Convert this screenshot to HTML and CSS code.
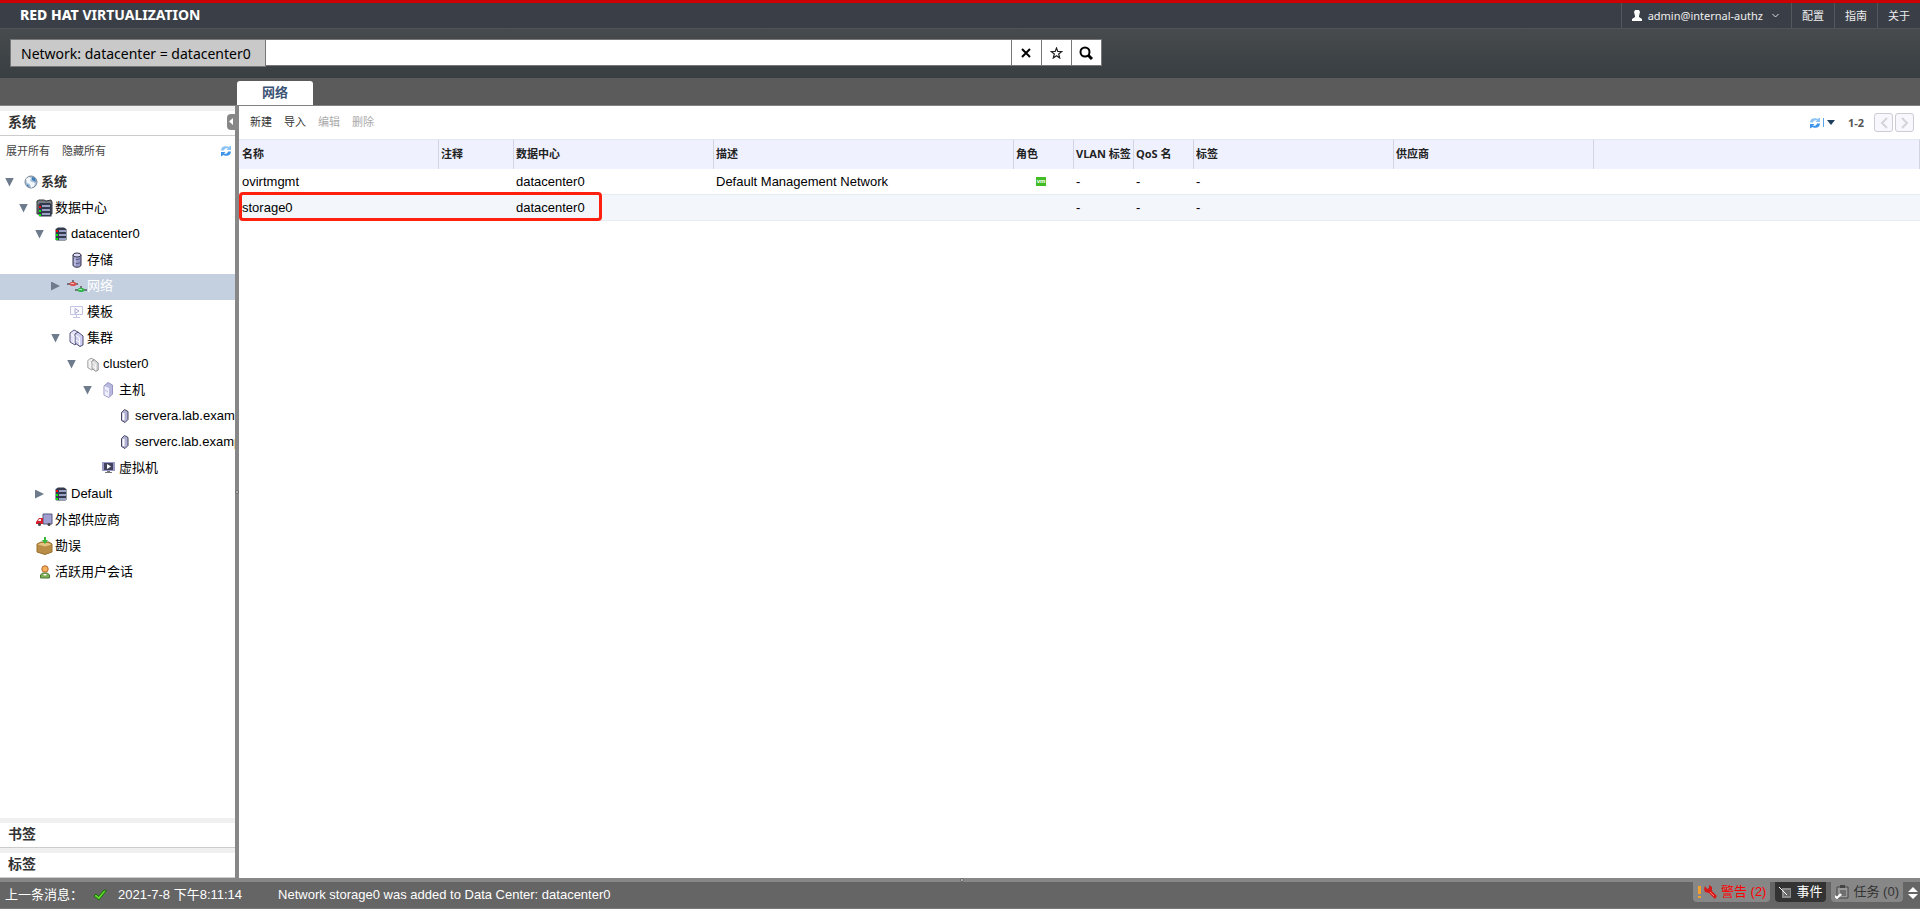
FILE: index.html
```html
<!DOCTYPE html>
<html lang="zh-CN">
<head>
    <meta charset="UTF-8">
    <meta name="viewport" content="width=device-width, initial-scale=1.0">
    <title>Red Hat Virtualization</title>
    <link rel="stylesheet" href="styles.css">
</head>
<body>
    <!-- shared icons -->
    <svg class="sprite" aria-hidden="true">
        <symbol id="refresh" viewBox="0 0 12 12">
            <path d="M1 5.500C1 2.500 3.500 1 6 1.300c1.500 0 2 .200 2.500.700L11 .500V5H6.500L8 3.500C6.500 2.700 4.500 3.200 4 5.500z" fill="#8cc3f5"/>
            <path d="M11 6.500c0 3-2.500 4.500-5 4.200-1.500 0-2-.200-2.500-.700L1 11.500V7h4.500L4 8.500C5.500 9.300 7.500 8.800 8 6.500z" fill="#3d94ea"/>
        </symbol>
        <symbol id="globe" viewBox="0 0 14 14">
            <circle cx="7" cy="7" r="6" fill="#a9c3dd" stroke="#7b8794"/>
            <path d="M2 4l3-2 2 1-1 3 2 1 3 1-1 3-3 2-1-4-3-1z" fill="#f4f8fb"/>
            <path d="M8 2l3 1 1 4-2-1-2-1zM3 9l3 3-3-1z" fill="#3f7cb8"/>
        </symbol>
        <symbol id="dc" viewBox="0 0 12 14">
            <path d="M1.500 1.500L3 .500h6l1.500 1 1 1v10l-1 1h-9l-1-1v-10z" fill="#333a4d"/>
            <path d="M4 3h7v2H4zM4 7h7v2H4zM4 11h7v2H4z" fill="#9aa2c4"/>
            <path d="M1 3h2v2H1z" fill="#f00"/>
            <path d="M1 7h2v2H1zM1 11h2v2H1z" fill="#0e0"/>
        </symbol>
        <symbol id="dcs" viewBox="0 0 17 18">
            <path d="M1 2l2-1h5l2 1 5-1 1 2v12H1z" fill="#777c83" stroke="#303438"/>
            <path d="M4 4h10l1.500 1.500v12H3.500L2.500 16V5.500z" fill="#333a4d"/>
            <path d="M6 6h8v2H6zM6 10h8v2H6zM6 14h8v2H6z" fill="#9aa2c4"/>
            <path d="M3 7h2v2H3z" fill="#f00"/>
            <path d="M3 11h2v2H3zM3 15h2v2H3z" fill="#0e0"/>
        </symbol>
        <symbol id="storage" viewBox="0 0 10 16">
            <path d="M1 3v10c0 3 8 3 8 0V3" fill="#9999c8" stroke="#34344b"/>
            <ellipse cx="5" cy="3" rx="4" ry="2" fill="#dcdcf4" stroke="#34344b"/>
            <path d="M1.500 6c1 2 6 2 7 0M1.500 10c1 2 6 2 7 0" fill="none" stroke="#5d5d8c"/>
            <path d="M3 5.500v8" stroke="#e2e2f7"/>
        </symbol>
        <symbol id="network" viewBox="0 0 20 14">
            <path d="M0 5h11M6 1v2M8 11h12M14 7v2" stroke="#555" stroke-width="1.500"/>
            <path d="M2 5l2-2h4l2 2-2 2H4z" fill="#d8504f"/>
            <path d="M10 11l2-2h4l2 2-2 2h-4z" fill="#32b84e"/>
            <path d="M4 4.500h3M12 10.500h3" stroke="#fff" stroke-opacity=".6"/>
        </symbol>
        <symbol id="template" viewBox="0 0 14 12">
            <path d="M.500.500h12v8H.500zM6.500 9v2M3 11.500h7" fill="#fafaff" stroke="#c3c3e2"/>
            <path d="M5 2.500l4 2.500-4 2.500z" fill="#fff" stroke="#aaaad2"/>
        </symbol>
        <symbol id="cluster" viewBox="0 0 15 18">
            <path d="M1 4l4-3 4 2v10l-3 3-5-3z" fill="#e4e4fa" stroke="#5b5b80"/>
            <path d="M6 5l3-2 5 4v9l-3 1.500L6 14z" fill="#cfcff2" stroke="#4c4c70"/>
            <path d="M6.500 6l4 3v7M2 5l3 2v7M7 11l3 2" fill="none" stroke="#fff"/>
        </symbol>
        <symbol id="cluster-gray" viewBox="0 0 15 18">
            <path d="M1 4l4-3 4 2v10l-3 3-5-3z" fill="#efefef" stroke="#8b8b8b"/>
            <path d="M6 5l3-2 5 4v9l-3 1.500L6 14z" fill="#dcdcdc" stroke="#777"/>
            <path d="M6.500 6l4 3v7M2 5l3 2v7M7 11l3 2" fill="none" stroke="#fff"/>
        </symbol>
        <symbol id="host" viewBox="0 0 11 16">
            <path d="M1 4l4-3.500L9.500 3v9L6 15.500 1 13z" fill="#b9b9e0" stroke="#9494bd"/>
            <path d="M1.500 4L6 6v9l-4.500-2z" fill="#eeeeff"/>
            <path d="M2 8l3 2" stroke="#bcbcd8"/>
        </symbol>
        <symbol id="server" viewBox="0 0 8 14">
            <path d="M.500 3.500l3-3 3.500 2v8l-3 3-3.500-2z" fill="#b2b2d4" stroke="#44445f"/>
            <path d="M2.500 4v7" stroke="#fff" stroke-width="2"/>
        </symbol>
        <symbol id="vm" viewBox="0 0 14 12">
            <path d="M0 0h13v9H0z" fill="#9a9ac6"/>
            <path d="M2 1h9v7H2z" fill="#42425d"/>
            <path d="M5 2l4 2.500L5 7z" fill="#fff"/>
            <path d="M5 9h3v1h2v1H3v-1h2z" fill="#777"/>
        </symbol>
        <symbol id="truck" viewBox="0 0 17 14">
            <path d="M7 1h9v10H7z" fill="#a0a0d2" stroke="#57577a"/>
            <path d="M0 9l3-4h4v6H0z" fill="#d51f2c"/>
            <path d="M3 6h2v2H2z" fill="#eee"/>
            <circle cx="3.500" cy="11.500" r="1.500" fill="#444"/>
            <circle cx="13" cy="11.500" r="1.500" fill="#444"/>
        </symbol>
        <symbol id="box" viewBox="0 0 17 18">
            <path d="M1 7l4-2h8l3 2v8l-7 2.500L1 15z" fill="#b98d45" stroke="#97702f"/>
            <path d="M1.500 7.500L9 9.500l6.500-2L12 6H5z" fill="#e4c483"/>
            <path d="M8 0v3H6l3 4 3-4h-2V0z" fill="#36b83a"/>
        </symbol>
        <symbol id="user" viewBox="0 0 10 14">
            <path d="M.500 13V10l2-2h5l2 2v3z" fill="#7fae59" stroke="#4b7a34"/>
            <circle cx="5" cy="4" r="3.200" fill="#f5b25e" stroke="#b6642b"/>
            <path d="M3 9l2 2 2-2z" fill="#fff"/>
        </symbol>
    </svg>

    <header class="topbar">
        <div class="brand"><b>RED HAT</b> VIRTUALIZATION</div>
        <nav class="top-links">
            <a href="#" class="user-link">
                <svg width="10" height="11" viewBox="0 0 10 11"><path d="M3 0h4l1 2-1 4v1l3 2v2H0V9l3-2V6L2 2z" fill="#fff"/></svg>
                admin@internal-authz
                <svg class="chevron" width="7" height="5" viewBox="0 0 7 5"><path d="M.500 1l3 3 3-3" fill="none" stroke="#ddd"/></svg>
            </a>
            <a href="#">配置</a>
            <a href="#">指南</a>
            <a href="#">关于</a>
        </nav>
    </header>

    <form class="search">
        <label class="search-prefix" for="search">Network: datacenter = datacenter0</label>
        <input class="search-input" id="search" type="text">
        <button type="button" aria-label="清除"><svg width="10" height="10" viewBox="0 0 10 10"><path d="M1 1l8 8M9 1L1 9" stroke="#000" stroke-width="2"/></svg></button>
        <button type="button" aria-label="书签"><svg width="13" height="12" viewBox="0 0 13 12"><path d="M6.500 1l1.300 3.500h4L8.700 7l1 4-3.200-2.300L3.300 11l1-4L1.200 4.500h4z" fill="none" stroke="#222" stroke-width="1.200"/></svg></button>
        <button type="button" aria-label="搜索"><svg width="14" height="14" viewBox="0 0 14 14"><circle cx="6" cy="6" r="4.500" fill="none" stroke="#000" stroke-width="2"/><path d="M9 9l4 4" stroke="#000" stroke-width="3"/></svg></button>
    </form>

    <div class="tabs"><a href="#" class="tab">网络</a></div>

    <div class="main">
        <aside class="sidebar">
            <h2 class="panel-title">系统
                <button type="button" class="collapse" aria-label="折叠"><svg width="4" height="7" viewBox="0 0 4 7"><path d="M4 0v7L0 3.500z" fill="#fff"/></svg></button>
            </h2>
            <div class="tree-tools">
                <a href="#">展开所有</a>
                <a href="#">隐藏所有</a>
                <svg class="tree-refresh" width="12" height="12"><use href="#refresh"/></svg>
            </div>
            <ul class="tree">
                <li><div class="node root"><i class="arrow open"></i><span class="icon"><svg width="14" height="14"><use href="#globe"/></svg></span>系统</div>
                    <ul>
                        <li><div class="node"><i class="arrow open"></i><span class="icon"><svg width="17" height="18"><use href="#dcs"/></svg></span>数据中心</div>
                            <ul>
                                <li><div class="node"><i class="arrow open"></i><span class="icon"><svg width="12" height="14"><use href="#dc"/></svg></span>datacenter0</div>
                                    <ul>
                                        <li><div class="node"><i class="arrow"></i><span class="icon"><svg width="10" height="16"><use href="#storage"/></svg></span>存储</div></li>
                                        <li><div class="node selected"><i class="arrow closed"></i><span class="icon"><svg width="20" height="14"><use href="#network"/></svg></span>网络</div></li>
                                        <li><div class="node"><i class="arrow"></i><span class="icon"><svg width="14" height="12"><use href="#template"/></svg></span>模板</div></li>
                                        <li><div class="node"><i class="arrow open"></i><span class="icon"><svg width="15" height="18"><use href="#cluster"/></svg></span>集群</div>
                                            <ul>
                                                <li><div class="node"><i class="arrow open"></i><span class="icon"><svg width="12" height="15"><use href="#cluster-gray"/></svg></span>cluster0</div>
                                                    <ul>
                                                        <li><div class="node"><i class="arrow open"></i><span class="icon"><svg width="11" height="16"><use href="#host"/></svg></span>主机</div>
                                                            <ul>
                                                                <li><div class="node"><i class="arrow"></i><span class="icon"><svg width="8" height="14"><use href="#server"/></svg></span>servera.lab.example.com</div></li>
                                                                <li><div class="node"><i class="arrow"></i><span class="icon"><svg width="8" height="14"><use href="#server"/></svg></span>serverc.lab.example.com</div></li>
                                                            </ul>
                                                        </li>
                                                        <li><div class="node"><i class="arrow"></i><span class="icon"><svg width="14" height="12"><use href="#vm"/></svg></span>虚拟机</div></li>
                                                    </ul>
                                                </li>
                                            </ul>
                                        </li>
                                    </ul>
                                </li>
                                <li><div class="node"><i class="arrow closed"></i><span class="icon"><svg width="12" height="14"><use href="#dc"/></svg></span>Default</div></li>
                            </ul>
                        </li>
                        <li><div class="node"><i class="arrow"></i><span class="icon"><svg width="17" height="14"><use href="#truck"/></svg></span>外部供应商</div></li>
                        <li><div class="node"><i class="arrow"></i><span class="icon"><svg width="17" height="18"><use href="#box"/></svg></span>勘误</div></li>
                        <li><div class="node"><i class="arrow"></i><span class="icon"><svg width="10" height="14"><use href="#user"/></svg></span>活跃用户会话</div></li>
                    </ul>
                </li>
            </ul>
            <h2 class="panel-title">书签</h2>
            <h2 class="panel-title">标签</h2>
        </aside>
        <div class="splitter"><i class="grip"></i></div>
        <section class="content">
            <div class="toolbar">
                <button type="button">新建</button>
                <button type="button">导入</button>
                <button type="button" disabled>编辑</button>
                <button type="button" disabled>删除</button>
                <div class="paging">
                    <svg width="12" height="12"><use href="#refresh"/></svg>
                    <svg width="12" height="9" viewBox="0 0 12 9"><path d="M.500 0v9" stroke="#5aa5ea"/><path d="M4 2h8L8 7z" fill="#1d3e5c"/></svg>
                    <span class="range">1-2</span>
                    <button type="button" class="page" aria-label="上一页"><svg width="8" height="12" viewBox="0 0 8 12"><path d="M7 1L2 6l5 5" fill="none" stroke="#d4d4d8" stroke-width="2"/></svg></button>
                    <button type="button" class="page" aria-label="下一页"><svg width="8" height="12" viewBox="0 0 8 12"><path d="M1 1l5 5-5 5" fill="none" stroke="#d4d4d8" stroke-width="2"/></svg></button>
                </div>
            </div>
            <div class="grid">
                <table>
                    <colgroup>
                        <col class="w200"><col class="w75"><col class="w200"><col class="w300"><col class="w60"><col class="w60"><col class="w60"><col class="w200"><col class="w200"><col>
                    </colgroup>
                    <thead>
                        <tr><th>名称</th><th>注释</th><th>数据中心</th><th>描述</th><th>角色</th><th>VLAN 标签</th><th>QoS 名</th><th>标签</th><th>供应商</th><th></th></tr>
                    </thead>
                    <tbody>
                        <tr><td>ovirtmgmt</td><td></td><td>datacenter0</td><td>Default Management Network</td><td><span class="vm-badge">vm</span></td><td>-</td><td>-</td><td>-</td><td></td><td></td></tr>
                        <tr><td>storage0</td><td></td><td>datacenter0</td><td></td><td></td><td>-</td><td>-</td><td>-</td><td></td><td></td></tr>
                    </tbody>
                </table>
                <div class="highlight"></div>
            </div>
        </section>
    </div>

    <footer class="statusbar">
        <i class="grip"></i>
        <span>上一条消息：</span>
        <svg class="ok" width="14" height="12" viewBox="0 0 14 12"><path d="M1 7l2-2 2.500 2.500L11 1l2.500.500L6 11z" fill="#5fdc28" stroke="#176b0c"/></svg>
        <span class="time">2021-7-8 下午8:11:14</span>
        <span>Network storage0 was added to Data Center: datacenter0</span>
        <div class="events">
            <button type="button" class="alert">
                <svg width="20" height="14" viewBox="0 0 20 14"><path d="M1 1h3v8H1zM1 11h3v2H1z" fill="#f5a02c"/><path d="M8 1l2 3 2-1V0l3 2v4l5 5-2 3-6-6-4-1-1-3z" fill="#d51a1a"/><path d="M13 7l4 4" stroke="#f77"/></svg>
                警告 (2)
            </button>
            <button type="button" class="active">
                <svg width="13" height="13" viewBox="0 0 13 13"><path d="M3 2h9v10H3z" fill="#8a8a8a"/><path d="M5 5h6M5 7h6M5 9h6" stroke="#444"/><path d="M0 1l8 8" stroke="#fff"/></svg>
                事件
            </button>
            <button type="button">
                <svg width="14" height="14" viewBox="0 0 14 14"><path d="M2 2h11v11H2z" fill="#999" stroke="#444"/><path d="M5 0h5v3H5z" fill="#444"/><path d="M5 6h6M5 8h6M7 10h4" stroke="#444"/><path d="M0 11l2 2 4-4" fill="none" stroke="#fff" stroke-width="2"/></svg>
                任务 (0)
            </button>
            <svg class="expand" width="10" height="12" viewBox="0 0 10 12"><path d="M5 0l5 5H0zM5 12l5-5H0z" fill="#fff"/></svg>
        </div>
    </footer>
</body>
</html>
```

FILE: styles.css
```css
* {
    box-sizing: border-box;
}

body {
    margin: 0;
    height: 100vh;
    display: flex;
    flex-direction: column;
    overflow: hidden;
    font: 13px/16px "Liberation Sans", "Noto Sans CJK SC", sans-serif;
    color: #000;
    background: #fff;
}

a {
    color: inherit;
    text-decoration: none;
}

button {
    font: inherit;
    color: inherit;
    margin: 0;
    cursor: pointer;
}

svg {
    display: block;
    flex: none;
}

.sprite {
    position: absolute;
    width: 0;
    height: 0;
}

/* header */
.topbar {
    display: flex;
    justify-content: space-between;
    height: 29px;
    border-top: 3px solid #c00;
    border-bottom: 1px solid #505459;
    background: #3a3f47;
    color: #eee;
    font-family: "Noto Sans", "Noto Sans CJK SC", sans-serif;
}

.brand {
    padding-left: 20px;
    font-size: 14px;
    font-weight: 700;
    line-height: 24px;
    color: #fff;
}

.brand b {
    font-weight: 800;
}

.top-links {
    display: flex;
    font-size: 11px;
}

.top-links a {
    display: flex;
    align-items: center;
    padding: 0 10px;
    border-left: 1px solid #54585d;
}

.top-links .user-link {
    gap: 6px;
    padding-right: 12px;
}

.chevron {
    margin-left: 3px;
}

/* search */
.search {
    display: flex;
    align-items: flex-start;
    height: 49px;
    padding: 10px;
    background: linear-gradient(#474b4e, #383e41);
}

.search-prefix,
.search-input,
.search button {
    height: 27px;
    border: 1px solid #777;
    background: #fff;
}

.search-prefix {
    height: 28px;
    padding: 0 14px 0 10px;
    line-height: 28px;
    font-family: "Noto Sans", sans-serif;
    font-size: 14px;
    white-space: nowrap;
    background: #c9c9c9;
}

.search-input {
    flex: 0 1 746px;
    min-width: 100px;
    border-left: 0;
    padding: 0 6px;
}

.search button {
    display: flex;
    align-items: center;
    justify-content: center;
    width: 30px;
    padding: 0;
    border-left: 0;
}

.tabs {
    display: flex;
    align-items: flex-end;
    height: 28px;
    padding-left: 237px;
    border-bottom: 1px solid #828282;
    background: #5b5b5b;
}

.tab {
    height: 24px;
    width: 76px;
    text-align: center;
    line-height: 24px;
    font-weight: bold;
    color: #3b5374;
    background: #fff;
    border-radius: 3px 3px 0 0;
}

.main {
    flex: 1;
    display: flex;
    min-height: 0;
}

/* sidebar */
.sidebar {
    flex: 0 0 235px;
    display: flex;
    flex-direction: column;
    overflow: hidden;
}

.panel-title {
    display: flex;
    align-items: center;
    justify-content: space-between;
    height: 30px;
    flex: none;
    margin: 0;
    padding: 0 0 3px 8px;
    font-size: 14px;
    color: #333;
    border-top: 5px solid #f0f0f0;
    border-bottom: 1px solid #ccc;
}

.collapse {
    display: flex;
    align-items: center;
    justify-content: center;
    width: 8px;
    height: 16px;
    padding: 0;
    border: 0;
    border-radius: 4px 0 0 4px;
    background: #878787;
}

.tree-tools {
    display: flex;
    align-items: center;
    gap: 12px;
    height: 34px;
    padding: 0 3px 4px 6px;
    font-size: 11px;
    color: #444;
}

.tree-refresh {
    margin-left: auto;
}

.tree,
.tree ul {
    margin: 0;
    padding: 0;
    list-style: none;
}

.tree {
    flex: 1;
    overflow: hidden;
}

.node {
    display: flex;
    align-items: center;
    height: 26px;
    padding-bottom: 2px;
    white-space: nowrap;
}

/* one indent step per level */
.tree ul .node { padding-left: 16px; }
.tree ul ul .node { padding-left: 32px; }
.tree ul ul ul .node { padding-left: 48px; }
.tree ul ul ul ul .node { padding-left: 64px; }
.tree ul ul ul ul ul .node { padding-left: 80px; }
.tree ul ul ul ul ul ul .node { padding-left: 96px; }

.root {
    padding-left: 2px;
    font-weight: bold;
    color: #333;
}

.tree .selected {
    background: #c4d0e0;
    color: #fff;
}

.arrow {
    flex: 0 0 18px;
    padding-left: 3px;
}

.arrow::before {
    display: block;
    width: 9px;
    height: 9px;
    background: #6d7b8d;
}

.arrow.open::before {
    content: "";
    clip-path: polygon(0 0, 100% 0, 50% 100%);
}

.arrow.closed::before {
    content: "";
    clip-path: polygon(0 0, 100% 50%, 0 100%);
}

.icon {
    flex: 0 0 21px;
    display: flex;
    justify-content: center;
}

.splitter {
    flex: 0 0 4px;
    display: flex;
    align-items: center;
    background: #878787;
}

.grip {
    width: 4px;
    height: 4px;
    background: #ccc;
    border: 1px solid #666;
    border-radius: 2px;
}

/* content */
.content {
    flex: 1;
    min-width: 0;
}

.toolbar {
    display: flex;
    align-items: center;
    gap: 12px;
    height: 33px;
    padding: 0 6px 0 11px;
    font-size: 11px;
    color: #333;
}

.toolbar > button {
    padding: 0 0 2px;
}

.toolbar button {
    border: 0;
    background: none;
}

.toolbar button:disabled {
    color: #aaa;
}

.paging {
    display: flex;
    align-items: center;
    gap: 2px;
    margin-left: auto;
}

.range {
    margin: 0 8px 0 11px;
    font: bold 11px "Open Sans", sans-serif;
    color: #555;
}

.toolbar .page {
    display: flex;
    align-items: center;
    justify-content: center;
    width: 19px;
    height: 19px;
    padding: 0;
    border: 1px solid #ccccd4;
    border-radius: 3px;
    background: #f7f7fd;
}

.grid {
    position: relative;
}

table {
    width: 100%;
    table-layout: fixed;
    border-collapse: separate;
    border-spacing: 0;
}

.w60 { width: 60px; }
.w75 { width: 75px; }
.w200 { width: 200px; }
.w300 { width: 300px; }

th {
    height: 30px;
    padding: 0 0 2px 2px;
    text-align: left;
    white-space: nowrap;
    font: bold 11px/16px "Open Sans", "Noto Sans CJK SC", sans-serif;
    color: #222;
    background: #eff1ff;
    border-top: 1px solid #e4e8f0;
    border-right: 1px solid #d2d4e2;
}

td {
    height: 26px;
    padding: 0 2px;
    white-space: nowrap;
    border-bottom: 1px solid #e8edf2;
}

th:first-child,
td:first-child {
    padding-left: 3px;
}

tbody tr:nth-child(even) {
    background: #f3f6fb;
}

.vm-badge {
    display: block;
    width: 10px;
    height: 9px;
    margin-left: 20px;
    background: #43bd25;
    color: #fff;
    font-size: 6px;
    font-weight: bold;
    line-height: 8px;
    text-align: center;
}

.highlight {
    position: absolute;
    top: 53px;
    left: 0;
    width: 363px;
    height: 29px;
    border: 3px solid #ff2010;
    border-radius: 4px;
}

/* status bar */
.statusbar {
    position: relative;
    display: flex;
    align-items: center;
    height: 31px;
    padding-left: 5px;
    border-top: 4px solid #878787;
    border-bottom: 1px solid #777;
    background: #656565;
    color: #fff;
    white-space: nowrap;
}

.statusbar .grip {
    position: absolute;
    top: -4px;
    left: 50%;
}

.ok {
    margin: 0 11px 0 10px;
}

.time {
    margin-right: 36px;
}

.events {
    display: flex;
    align-self: flex-start;
    gap: 5px;
    margin-left: auto;
    padding-right: 2px;
}

.events button {
    display: flex;
    align-items: center;
    gap: 4px;
    height: 20px;
    padding: 0 4px;
    border: 0;
    border-radius: 0 0 4px 4px;
    background: #878787;
    color: #333;
}

.events .alert {
    color: #f00;
}

.events .active {
    background: #333;
    color: #fff;
}

.expand {
    margin-top: 5px;
}
```
